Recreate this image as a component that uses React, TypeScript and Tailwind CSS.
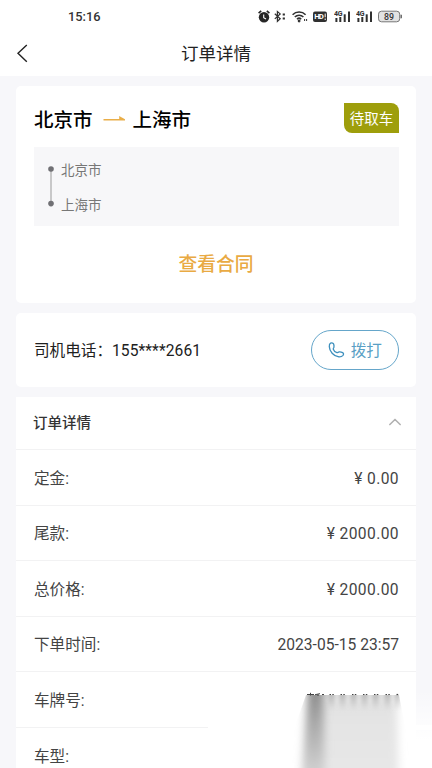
import { ChevronUp } from 'lucide-react'

const details = [
    { label: '定金:', value: '¥ 0.00' },
    { label: '尾款:', value: '¥ 2000.00' },
    { label: '总价格:', value: '¥ 2000.00' },
    { label: '下单时间:', value: '2023-05-15 23:57' },
    { label: '车牌号:', value: '' },
    { label: '车型:', value: '' },
]

function SignalIcon() {
    return <svg width="17" height="13" viewBox="0 0 17 13" fill="#303030">
        <text x="0" y="5.8" fontSize="7" fontWeight="700" fontFamily="Roboto, sans-serif" textLength="8.5">4G</text>
        <rect x="1.4" y="8" width="2" height="4" />
        <rect x="5.3" y="7" width="2" height="5" />
        <rect x="9.7" y="4.3" width="2" height="7.7" />
        <rect x="14" y="1.5" width="2" height="10.5" />
    </svg>
}

function StatusBar() {
    return <div className="flex h-8 items-center justify-between pl-[68px] pr-[30px]">
        <span className="pt-px text-[12.8px] font-medium leading-4 text-[#333]">15:16</span>
        <div className="flex items-center">
            <svg width="12" height="13" viewBox="0 0 12 13">
                <circle cx="6" cy="7.2" r="5.2" fill="#262626" />
                <path d="M.6 3.2 3.2.9M11.4 3.2 8.8.9" stroke="#262626" strokeWidth="1.6" />
                <path d="M5.7 4.4v3.2L8 9" fill="none" stroke="#fff" strokeWidth="1.1" />
            </svg>
            <svg className="ml-1" width="12" height="13" viewBox="0 0 12 13" fill="none" stroke="#303030" strokeWidth="1.2">
                <path d="m.8 3.8 5.4 5-2.8 2.5V1.5l2.8 2.4-5.4 5" />
                <path d="M8.7 4.5h2.2M8.7 8.5h2.2" strokeWidth="1.8" />
            </svg>
            <svg className="ml-1.5" width="16" height="13" viewBox="0 0 16 13" fill="none" stroke="#303030" strokeWidth="1.6">
                <path d="M.6 4.7a9.2 9.2 0 0 1 13 0M2.8 7a6.1 6.1 0 0 1 8.6 0M5 9.2a3 3 0 0 1 4.2 0" />
                <circle cx="7.1" cy="11" r=".6" />
                <path d="M12.6 9v2M14.6 9v2" strokeWidth="1" />
            </svg>
            <svg className="ml-[5px]" width="14" height="13" viewBox="0 0 14 13">
                <rect y="1.5" width="14" height="10.4" rx="2" fill="#303030" />
                <text x="1.3" y="9.3" fontSize="7.8" fontWeight="700" fontFamily="Roboto, sans-serif" fill="#fff" textLength="9.5">HD</text>
                <path d="M12.2 3.6v3.7M12.2 8.5V10" stroke="#fff" />
            </svg>
            <div className="ml-[7px]"><SignalIcon /></div>
            <div className="ml-[5px]"><SignalIcon /></div>
            <svg className="ml-[5px]" width="24" height="13" viewBox="0 0 24 13">
                <rect x=".5" y="1.2" width="21.2" height="10.6" rx="3" fill="#e2e2e2" stroke="#777" />
                <path d="M23.2 4.8v3.4" stroke="#555" strokeWidth="1.3" />
                <text x="6" y="9.6" fontSize="8.8" fontWeight="500" fontFamily="Roboto, sans-serif" fill="#333">89</text>
            </svg>
        </div>
    </div>
}

function RouteCard() {
    return <section className="h-[217px] rounded-[5px] bg-white px-[18px] pt-[17px]">
        <div className="flex h-[30px] items-center justify-between">
            <div className="flex items-center pt-[5px] text-[19.5px] font-medium leading-[30px] text-black">
                北京市
                <svg className="ml-2.5 mr-2 -mt-1" width="22" height="8" viewBox="0 0 22 8">
                    <path d="M.5 4.7h20.5L17 2.4v2" fill="#e9b152" stroke="#e9ae48" strokeWidth="1.6" />
                </svg>
                上海市
            </div>
            <span className="-mr-px flex h-[30px] w-[55px] items-center justify-center rounded-bl-lg rounded-tr-lg bg-[#9e9e0b] pt-[3px] text-[14.5px] text-white">待取车</span>
        </div>
        <div className="mt-3.5 flex h-[79px] w-[365px] bg-[#f7f7f9] pl-3.5 pt-[5px] text-[13.5px] text-[#777]">
            <svg className="mt-[13px]" width="6" height="43" viewBox="0 0 6 43">
                <path d="M3 4v35" stroke="#999" />
                <circle cx="3" cy="4" r="2.8" fill="#707074" />
                <circle cx="3" cy="38.6" r="2.8" fill="#707074" />
            </svg>
            <div className="ml-[7px] pt-px leading-[35px]">
                <p>北京市</p>
                <p>上海市</p>
            </div>
        </div>
        <p className="mt-[25px] text-center text-[18.8px] font-medium leading-7 text-[#e9aa43]">查看合同</p>
    </section>
}

function DriverCard() {
    return <section className="mt-2.5 flex h-[74px] items-center justify-between rounded-[5px] bg-white pl-[18px] pr-[17px]">
        <div className="flex pt-[3px] text-[15.6px] text-[#202020]">
            <span className="w-[78px]">司机电话：</span>
            <span className="tracking-[0.08px]">155****2661</span>
        </div>
        <button className="flex h-10 w-[88.5px] items-center justify-center rounded-full border border-[#65a6ca] text-[15.6px] text-[#5a9fc5]">
            <svg className="mr-1.5" width="17" height="17" viewBox="0 0 17 17" fill="none" stroke="#3d8fbd" strokeWidth="1.3" strokeLinejoin="round">
                <path d="M2.6 1.2c1.4-.5 2.7-.2 3.1 1 .4 1.2.4 2.2.2 3-.3.9-.9 1.2-.6 2 .6 1.7 2 2.900 3.600 3.400.8.200 1.200-.600 2.200-.700 1-.1 2.400.1 3.500.7 1.100.7 1.200 1.700.4 2.700-1.100 1.300-3 1.800-4.900 1.400C5.600 13.800 1.600 9.700 1.300 4.600c-.1-1.500.3-2.900 1.300-3.400Z" />
            </svg>
            <span className="pt-[3px]">拨打</span>
        </button>
    </section>
}

function DetailsCard() {
    return <section className="mt-2.5 bg-white text-[#444]">
        <div className="flex h-[53px] items-center justify-between border-b border-[#f2f2f3] pl-[17px] pr-[15px]">
            <h2 className="pt-0.5 text-[14.5px] font-medium text-[#333]">订单详情</h2>
            <ChevronUp className="-mt-0.5 text-[#b0b0b0]" size={12} strokeWidth={1.8} viewBox="5 6 14 12" />
        </div>
        {details.map(item => (
            <div key={item.label} className="flex h-[55.6px] items-center justify-between border-b border-[#f2f2f3] pl-[18px] pr-[17px] pt-1 text-[15.6px]">
                <span>{item.label}</span>
                <span className={item.value.startsWith('¥') ? 'tracking-[0.4px]' : ''}>{item.value}</span>
            </div>
        ))}
    </section>
}

// Smudge that hides the plate number and everything under it
function RedactedArea() {
    return <svg className="absolute left-[208px] top-[672px]" width="224" height="96" viewBox="0 0 224 96">
        <defs>
            <linearGradient id="page" x1="0" y1="0" x2="0" y2="1">
                <stop offset="0" stopColor="#fff" stopOpacity="0" />
                <stop offset="1" stopColor="#fff" />
            </linearGradient>
            <linearGradient id="smear" x1="0" y1="0" x2="0" y2="1">
                <stop offset="0" stopColor="#dadada" />
                <stop offset=".4" stopColor="#e4e4e4" />
                <stop offset="1" stopColor="#e8e8e8" />
            </linearGradient>
            <linearGradient id="dark" x1="0" y1="0" x2="0" y2="1">
                <stop offset="0" stopColor="#858585" />
                <stop offset=".35" stopColor="#a8a8a8" />
                <stop offset=".8" stopColor="#cdcdcd" />
                <stop offset="1" stopColor="#d6d6d6" />
            </linearGradient>
            <linearGradient id="streak" x1="0" y1="0" x2="0" y2="1">
                <stop offset="0" stopColor="#999" stopOpacity=".8" />
                <stop offset="1" stopColor="#bbb" stopOpacity="0" />
            </linearGradient>
            <filter id="soft" x="-50%" y="-20%" width="200%" height="140%"><feGaussianBlur stdDeviation="4 3" /></filter>
            <filter id="slight" x="-80%" y="-10%" width="260%" height="120%"><feGaussianBlur stdDeviation="1.6" /></filter>
            <clipPath id="top"><path d="M98 23h93l14 73H72Z" /></clipPath>
        </defs>
        <rect x="208" y="18" width="16" height="50" fill="url(#page)" />
        <rect x="208" y="68" width="16" height="28" fill="#fff" />
        <rect y="53" width="224" height="5" fill="#fff" />
        <g clipPath="url(#top)">
            <path d="M108 0h80l3 116H98Z" fill="url(#smear)" filter="url(#soft)" />
            <path d="M100 14h15l2 102H93Z" fill="url(#dark)" filter="url(#soft)" />
            {[123, 134, 145, 156, 167, 179, 189].map(x => (
                <rect key={x} x={x - 2.5} y="17" width="6" height="22" fill="url(#streak)" filter="url(#slight)" />
            ))}
        </g>
        <path d="M99 22.5h7M102.5 20.8v2.7M107 22.7l5-1M110 22v2M114 22.5h2" stroke="#444" strokeWidth="1" />
        {[121.5, 132.5, 144, 155, 166, 177.5].map(x => (
            <path key={x} d={`M${x} 22.5h1.5M${x + 2.8} 22.5h1.5`} stroke="#444" strokeWidth="1.2" />
        ))}
        <path d="M188.5 22.5h1.7" stroke="#444" strokeWidth="1.2" />
    </svg>
}

export default function App() {
    return <div className="relative h-[768px] w-[432px] overflow-hidden bg-[#f7f7fa] font-['Roboto','Noto_Sans_CJK_SC',sans-serif]">
        <header className="h-[76px] bg-white">
            <StatusBar />
            <div className="grid h-11 grid-cols-3 items-center">
                <svg className="ml-4" width="12" height="20" viewBox="0 0 12 20" fill="none" stroke="#222" strokeWidth="1.4">
                    <path d="M10.8 1 2 9.200l8.800 8.600" />
                </svg>
                <h1 className="text-center text-[17.5px] text-[#222]">订单详情</h1>
            </div>
        </header>
        <main className="px-4 pt-2.5">
            <RouteCard />
            <DriverCard />
            <DetailsCard />
        </main>
        <RedactedArea />
    </div>
}
